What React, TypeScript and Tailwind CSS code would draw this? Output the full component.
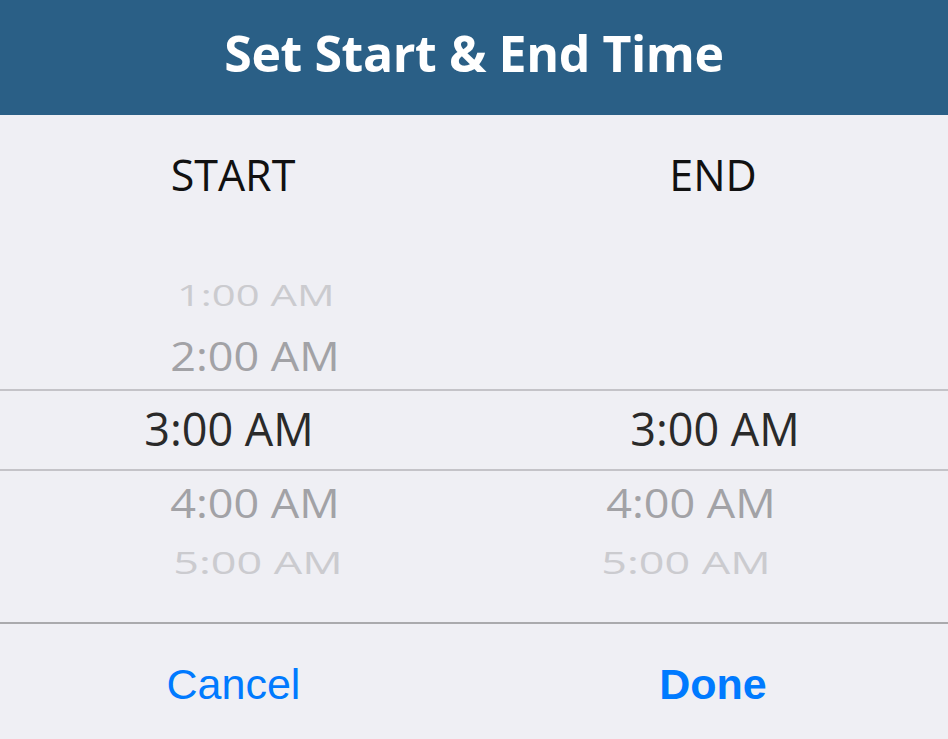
import { FC, ReactNode } from 'react';

const wheelFont = { fontFamily: '"Open Sans", "Liberation Sans", sans-serif' };

type Tone = 'top' | 'far' | 'near' | 'selected';

const toneClass: Record<Tone, string> = {
  top: 'text-[#cbcbcf] scale-y-[0.66] scale-x-[0.93]',
  far: 'text-[#cbcbcf] scale-y-[0.68]',
  near: 'text-[#a2a2a6] scale-y-[0.88]',
  selected: 'text-[#2a2a2a]',
};

const WheelItem: FC<{ tone: Tone; offset?: string; children?: ReactNode }> = ({ tone, offset = '', children }) => (
  <span className={`block text-[45px] leading-none whitespace-nowrap ${toneClass[tone]} ${offset}`} style={wheelFont}>
    {children}
  </span>
);

const Row: FC<{ height: string; left?: ReactNode; right?: ReactNode }> = ({ height, left, right }) => (
  <div className={`grid grid-cols-2 ${height}`}>
    <div className="flex items-center justify-center">{left}</div>
    <div className="flex items-center justify-center">{right}</div>
  </div>
);

export default function App() {
  return (
    <div className="w-[948px] h-[739px] flex flex-col bg-[#efeff4] overflow-hidden">
      <header className="h-[115px] bg-[#2a5f86] flex items-center justify-center pb-[9px]">
        <h1
          className="text-white text-[50px] font-bold tracking-[-0.4px] leading-none"
          style={{ fontFamily: '"Open Sans", "Liberation Sans", sans-serif' }}
        >
          Set Start &amp; End Time
        </h1>
      </header>

      <div className="grid grid-cols-2 h-[122px] items-center text-[43px] text-[#111] leading-none pb-[4px]" style={wheelFont}>
        <span className="text-center mr-[8px]">START</span>
        <span className="text-center ml-[4px]">END</span>
      </div>

      {/* wheel above the selection band */}
      <div className="h-[152px] pt-[27px]">
        <Row height="h-[60px]" left={<WheelItem tone="top" offset="ml-[38px]">1:00 AM</WheelItem>} />
        <Row height="h-[62px]" left={<WheelItem tone="near" offset="ml-[36px]">2:00 AM</WheelItem>} />
      </div>

      <div className="h-[82px] border-y-2 border-[#c4c3c8]">
        <Row
          height="h-[74px]"
          left={<WheelItem tone="selected" offset="mr-[16px]">3:00 AM</WheelItem>}
          right={<WheelItem tone="selected" offset="ml-[8px]">3:00 AM</WheelItem>}
        />
      </div>

      {/* wheel below the selection band */}
      <div className="h-[151px]">
        <Row
          height="h-[62px]"
          left={<WheelItem tone="near" offset="ml-[36px]">4:00 AM</WheelItem>}
          right={<WheelItem tone="near" offset="mr-[40px]">4:00 AM</WheelItem>}
        />
        <Row
          height="h-[58px]"
          left={<WheelItem tone="far" offset="ml-[42px]">5:00 AM</WheelItem>}
          right={<WheelItem tone="far" offset="mr-[50px]">5:00 AM</WheelItem>}
        />
      </div>

      <div
        className="flex-1 grid grid-cols-2 items-center border-t-2 border-[#aaaaad] text-[43px] text-[#007aff] pt-[5px]"
        style={{ fontFamily: '"Liberation Sans", Arial, sans-serif' }}
      >
        <button className="text-center leading-none mr-[7px]">Cancel</button>
        <button className="text-center leading-none font-bold ml-[4px]">Done</button>
      </div>
    </div>
  );
}
